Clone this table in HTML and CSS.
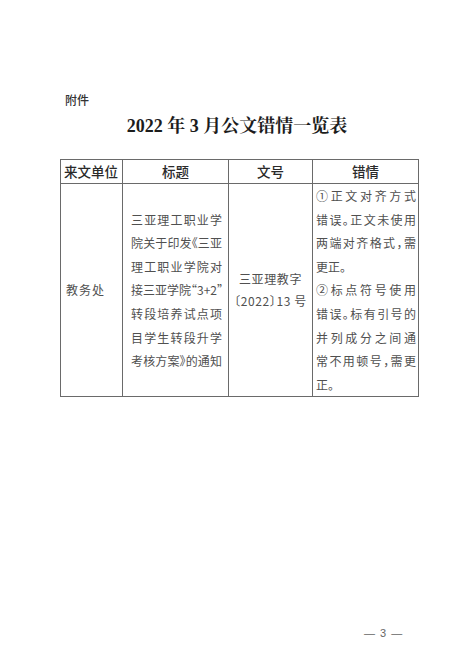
FILE: index.html
```html
<!DOCTYPE html>
<html lang="zh-CN">
<head>
<meta charset="utf-8">
<title>2022年3月公文错情一览表</title>
<link rel="stylesheet" href="styles.css">
</head>
<body>
<div class="page">
  <div class="attach">附件</div>
  <h1 class="title">2022 年 3 月公文错情一览表</h1>
  <table class="sheet">
    <colgroup>
      <col class="c1"><col class="c2"><col class="c3"><col class="c4">
    </colgroup>
    <thead>
      <tr>
        <th class="h-left">来文单位</th>
        <th>标题</th>
        <th>文号</th>
        <th>错情</th>
      </tr>
    </thead>
    <tbody>
      <tr>
        <td class="unit">教务处</td>
        <td class="subject">
          <span class="ln">三亚理工职业学</span>
          <span class="ln">院关于印发<span class="p">《</span>三亚</span>
          <span class="ln">理工职业学院对</span>
          <span class="ln">接三亚学院<span class="p">“</span>3+2<span class="p">”</span></span>
          <span class="ln">转段培养试点项</span>
          <span class="ln">目学生转段升学</span>
          <span class="ln">考核方案<span class="p">》</span>的通知</span>
        </td>
        <td class="docno">
          <span class="ln-c">三亚理教字</span>
          <span class="ln-c"><span class="p">〔</span>2022<span class="p">〕</span>13 号</span>
        </td>
        <td class="errors">
          <span class="ln">①正文对齐方式</span>
          <span class="ln">错误<span class="p">。</span>正文未使用</span>
          <span class="ln">两端对齐格式<span class="p">，</span>需</span>
          <span class="ln last">更正<span class="p">。</span></span>
          <span class="ln">②标点符号使用</span>
          <span class="ln">错误<span class="p">。</span>标有引号的</span>
          <span class="ln">并列成分之间通</span>
          <span class="ln">常不用顿号<span class="p">，</span>需更</span>
          <span class="ln last">正<span class="p">。</span></span>
        </td>
      </tr>
    </tbody>
  </table>
  <div class="folio">— 3 —</div>
</div>
</body>
</html>
```

FILE: styles.css
```css
html, body {
  margin: 0;
  padding: 0;
  background: #ffffff;
}

.page {
  width: 474px;
  height: 669px;
  position: relative;
  box-sizing: border-box;
  padding-top: 92px;
  font-family: "Noto Sans CJK SC", "Liberation Sans", sans-serif;
  color: #333;
}

.attach {
  margin-left: 65px;
  font-size: 12px;
  line-height: 16px;
  color: #333;
  font-weight: 500;
}

.title {
  margin: 6px 0 0 0;
  text-align: center;
  font-family: "Liberation Serif", "Noto Serif CJK SC", "Noto Sans CJK SC", serif;
  font-weight: bold;
  font-size: 18px;
  line-height: 24px;
  color: #1c1c1c;
}

.sheet {
  margin: 21px 0 0 60px;
  width: 358px;
  border-collapse: collapse;
  table-layout: fixed;
  border: 1px solid #6a6a6a;
}

.c1 { width: 62px; }
.c2 { width: 106px; }
.c3 { width: 84px; }
.c4 { width: 106px; }

.sheet th,
.sheet td {
  border: 1px solid #6a6a6a;
  padding: 0;
}

.sheet th {
  height: 23px;
  font-size: 13.5px;
  font-weight: 500;
  color: #2a2a2a;
  text-align: center;
  line-height: 23px;
}

.sheet th.h-left {
  text-align: left;
  padding-left: 3px;
}

.sheet td {
  vertical-align: middle;
  font-size: 12px;
  color: #505050;
  line-height: 23.6px;
}

.unit {
  padding-left: 5px !important;
  letter-spacing: 1px;
}

.subject {
  padding: 0 6px 0 8px !important;
}

.errors {
  padding: 0 2px 0 3px !important;
}

.p {
  font-feature-settings: "halt" 1;
}

.ln {
  display: block;
  text-align: justify;
  text-align-last: justify;
  white-space: nowrap;
}

.ln.last {
  text-align-last: left;
}

.docno {
  text-align: center;
}

.ln-c {
  display: block;
  line-height: 22px;
  white-space: nowrap;
  letter-spacing: 0.6px;
}

.folio {
  position: absolute;
  left: 364px;
  top: 627px;
  font-family: "Liberation Sans", sans-serif;
  font-size: 11px;
  color: #666;
  letter-spacing: 1px;
}
```
